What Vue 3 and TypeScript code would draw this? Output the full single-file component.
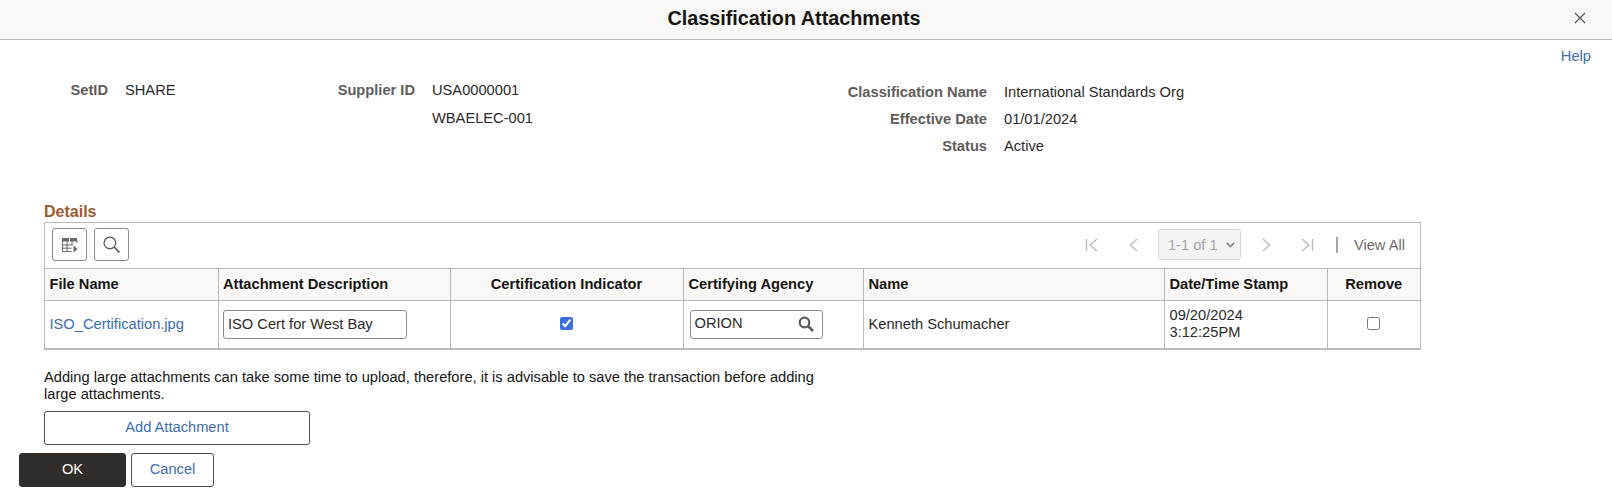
<script setup lang="ts">
const columns = [
  { label: 'File Name', cls: 'col-file' },
  { label: 'Attachment Description', cls: 'col-desc' },
  { label: 'Certification Indicator', cls: 'col-cert center' },
  { label: 'Certifying Agency', cls: 'col-agency' },
  { label: 'Name', cls: 'col-name' },
  { label: 'Date/Time Stamp', cls: 'col-date' },
  { label: 'Remove', cls: 'col-remove center' },
]
</script>

<template>
  <div class="page">
    <header class="titlebar">
      <h1>Classification Attachments</h1>
      <svg class="close" width="14" height="14" viewBox="0 0 14 14" aria-label="Close">
        <path d="M2 2l10 10M12 2L2 12" stroke="#5c5c5c" stroke-width="1.4" fill="none" />
      </svg>
    </header>
    <div class="helprow"><a class="link">Help</a></div>

    <section class="summary">
      <div class="sum-a">
        <span class="lab">SetID</span><span>SHARE</span>
      </div>
      <div class="sum-b">
        <span class="lab">Supplier ID</span><span>USA0000001</span>
        <span></span><span>WBAELEC-001</span>
      </div>
      <div class="sum-c">
        <span class="lab">Classification Name</span><span>International Standards Org</span>
        <span class="lab">Effective Date</span><span>01/01/2024</span>
        <span class="lab">Status</span><span>Active</span>
      </div>
    </section>

    <section class="details">
      <h2>Details</h2>
      <div class="grid">
        <div class="toolbar">
          <button class="tool" aria-label="Personalize">
            <svg width="17" height="16" viewBox="0 0 17 16">
              <path d="M1 1h7v3.500H1zM9 1h7v3.500H9z" fill="#6a6a6a" />
              <path d="M1.500 4v10.500h9M1.500 8h10M1.500 11.200h9M6 4v10.500M11 4v4M16 4v2" stroke="#6a6a6a" stroke-width="1" fill="none" />
              <path d="M12.500 8.500l4 3.500-4 3.500z" fill="#6a6a6a" />
            </svg>
          </button>
          <button class="tool" aria-label="Find">
            <svg width="17" height="17" viewBox="0 0 16 16">
              <circle cx="6.500" cy="6.500" r="5.500" stroke="#5c5c5c" stroke-width="1.200" fill="none" />
              <path d="M10.500 10.500L15.500 15.500" stroke="#5c5c5c" stroke-width="1.500" fill="none" />
            </svg>
          </button>
          <div class="pager">
            <svg class="pg first" width="14" height="16" viewBox="0 0 14 16"><path d="M1.500 2v12M12 2L5 8l7 6" stroke="#bdb9b5" stroke-width="1.400" fill="none" /></svg>
            <svg class="pg prev" width="9" height="16" viewBox="0 0 9 16"><path d="M8 2L1.500 8 8 14" stroke="#bdb9b5" stroke-width="1.400" fill="none" /></svg>
            <div class="pgselect">
              <span>1-1 of 1</span>
              <svg width="9" height="6" viewBox="0 0 9 6"><path d="M.8.800l3.700 3.700L8.200.800" stroke="#8a8683" stroke-width="1.700" fill="none" /></svg>
            </div>
            <svg class="pg next" width="9" height="16" viewBox="0 0 9 16"><path d="M1 2l6.500 6L1 14" stroke="#bdb9b5" stroke-width="1.400" fill="none" /></svg>
            <svg class="pg last" width="14" height="16" viewBox="0 0 14 16"><path d="M12.500 2v12M2 2l7 6-7 6" stroke="#bdb9b5" stroke-width="1.400" fill="none" /></svg>
            <span class="bar"></span>
            <span class="viewall">View All</span>
          </div>
        </div>
        <table>
          <thead>
            <tr>
              <th v-for="c in columns" :key="c.label" :class="c.cls">{{ c.label }}</th>
            </tr>
          </thead>
          <tbody>
            <tr>
              <td class="low"><a class="link">ISO_Certification.jpg</a></td>
              <td><input class="text" type="text" value="ISO Cert for West Bay" /></td>
              <td class="center"><input class="check" type="checkbox" checked /></td>
              <td>
                <div class="lookup">
                  <span>ORION</span>
                  <svg width="16" height="16" viewBox="0 0 16 16">
                    <circle cx="6.500" cy="6.500" r="4.800" stroke="#5f5c59" stroke-width="2.200" fill="none" />
                    <path d="M10 10l5 5" stroke="#5f5c59" stroke-width="2.600" fill="none" />
                  </svg>
                </div>
              </td>
              <td class="low">Kenneth Schumacher</td>
              <td>09/20/2024<br />3:12:25PM</td>
              <td class="center"><input class="check" type="checkbox" /></td>
            </tr>
          </tbody>
        </table>
      </div>
    </section>

    <p class="note">Adding large attachments can take some time to upload, therefore, it is advisable to save the transaction before adding large attachments.</p>
    <button class="btn add">Add Attachment</button>
    <div class="actions">
      <button class="btn ok">OK</button>
      <button class="btn cancel">Cancel</button>
    </div>
  </div>
</template>

<style>
html, body { margin: 0; background: #fff; }
</style>

<style scoped>
.page {
  width: 1612px;
  height: 493px;
  overflow: hidden;
  font-family: "Liberation Sans", Arial, sans-serif;
  font-size: 14.67px;
  color: #2b2a28;
  background: #fff;
}
.titlebar {
  height: 36px;
  background: #f9f8f6;
  border-bottom: 1px solid #bdb9b5;
  display: flex;
  align-items: center;
  justify-content: center;
  position: relative;
  padding: 0 24px 3px 0;
  box-sizing: content-box;
}
.titlebar h1 {
  margin: 0;
  font-size: 19.800px;
  font-weight: 700;
  color: #161513;
}
.close { position: absolute; right: 25px; top: 11px; }
.helprow {
  display: flex;
  justify-content: flex-end;
  padding: 7px 21px 0 0;
  height: 19px;
  line-height: 18px;
}
.link { color: #3a6db5; }
.summary {
  display: flex;
  height: 137px;
  padding-top: 16px;
  box-sizing: border-box;
}
.summary > div { display: grid; align-content: start; column-gap: 17px; row-gap: 10px; line-height: 17.700px; }
.lab { font-weight: 700; color: #5f5c59; text-align: right; white-space: nowrap; }
.sum-a { grid-template-columns: 108px auto; width: 280px; }
.sum-b { grid-template-columns: 135px auto; column-gap: 19px; width: 452px; }
.summary > .sum-c { grid-template-columns: 255px auto; padding-top: 2px; row-gap: 9.500px; }
.details { padding-left: 44px; }
h2 {
  margin: 0 0 2px;
  font-size: 16px;
  font-weight: 700;
  color: #9e5a2e;
  line-height: 17px;
}
.grid {
  width: 1377px;
  border: 1px solid #bdb9b5;
  border-bottom: 2px solid #bdb9b5;
  box-sizing: border-box;
}
.toolbar {
  display: flex;
  align-items: center;
  gap: 7px;
  height: 45px;
  padding: 0 15px 2px 7px;
  box-sizing: border-box;
}
.tool {
  width: 35px;
  height: 33px;
  padding: 0;
  background: #fff;
  border: 1px solid #8f8b87;
  border-radius: 3px;
  display: flex;
  align-items: center;
  justify-content: center;
}
.pager {
  margin-left: auto;
  display: flex;
  align-items: center;
}
.pgselect {
  width: 83px;
  height: 31px;
  box-sizing: border-box;
  margin: 0 21px 0 20px;
  padding: 0 5px 0 9px;
  border: 1px solid #d9d6d3;
  border-radius: 3px;
  background: #f5f4f2;
  color: #a8a5a1;
  display: flex;
  align-items: center;
  justify-content: space-between;
}
.first { margin-right: 30px; }
.next { margin-right: 29px; }
.last { margin-right: 22px; }
.bar { width: 2px; height: 16px; background: #a8a5a1; margin-right: 16px; }
.viewall { color: #716c68; }
table {
  width: 100%;
  table-layout: fixed;
  border-collapse: collapse;
}
th, td {
  border: 1px solid #bdb9b5;
  box-sizing: border-box;
  padding: 0 5px;
  text-align: left;
  vertical-align: middle;
  line-height: 17.600px;
}
tr > :first-child { border-left: 0; }
tr > :last-child { border-right: 0; }
tr > :nth-child(-n+2) { padding-left: 4.500px; }
tbody td { border-bottom: 0; height: 47px; color: #2b2a28; }
tbody td.low { padding-top: 2px; }
tbody td.center { padding-bottom: 2px; }
th {
  height: 32px;
  background: #f9f8f6;
  font-weight: 700;
  color: #161513;
}
th.center, td.center { text-align: center; }
.col-file { width: 173px; }
.col-desc { width: 232px; }
.col-cert { width: 233px; }
.col-agency { width: 180px; }
.col-name { width: 301px; }
.col-date { width: 163px; }
.text {
  display: block;
  width: 184px;
  height: 29px;
  box-sizing: border-box;
  padding: 0 4px;
  border: 1px solid #8f8b87;
  border-radius: 3px;
  font: inherit;
  color: #2b2a28;
  background: #fff;
}
.check {
  width: 13px;
  height: 13px;
  margin: 0;
  vertical-align: middle;
  accent-color: #3b6fe0;
}
.lookup {
  width: 133px;
  height: 29px;
  box-sizing: border-box;
  padding: 0 8px 0 4px;
  border: 1px solid #8f8b87;
  border-radius: 3px;
  display: flex;
  align-items: center;
  justify-content: space-between;
}
td:nth-child(4) { padding-left: 6px; }
.note {
  margin: 19px 0 0 44px;
  width: 780px;
  line-height: 17.700px;
  color: #161513;
}
.btn {
  font: inherit;
  box-sizing: border-box;
  border-radius: 3px;
  border: 1px solid #4f4c4a;
  background: #fff;
  color: #3a6db5;
  padding: 0 0 2px;
  display: block;
}
.add { margin: 7px 0 0 44px; width: 266px; height: 34px; }
.actions {
  display: flex;
  gap: 5px;
  margin: 8px 0 0 19px;
}
.ok { width: 107px; height: 34px; background: #312d2a; border-color: #312d2a; color: #fff; }
.cancel { width: 83px; height: 34px; }
</style>
